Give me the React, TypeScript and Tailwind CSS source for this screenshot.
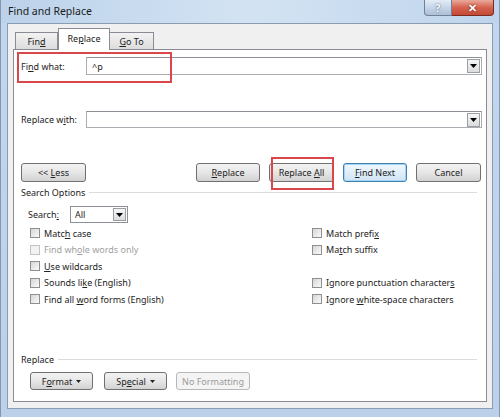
import React from 'react';
import clsx from 'clsx';

// Access key label: underlines the character at index `at`
const Acc: React.FC<{ text: string; at?: number }> = ({ text, at }) => {
  if (at === undefined || at < 0) return <>{text}</>;
  return (
    <>
      {text.slice(0, at)}
      <span className="underline underline-offset-[1px]">{text[at]}</span>
      {text.slice(at + 1)}
    </>
  );
};

const DropArrow: React.FC = () => (
  <svg width="7" height="4" viewBox="0 0 7 4">
    <path d="M0 0h7L3.5 4z" fill="#000" />
  </svg>
);

type BtnProps = {
  text: string;
  at?: number;
  className?: string;
  variant?: 'normal' | 'default' | 'disabled';
  menu?: boolean;
};

const Btn: React.FC<BtnProps> = ({ text, at, className, variant = 'normal', menu }) => (
  <div
    className={clsx(
      'flex items-center justify-center gap-[4px] rounded-[3px] border',
      variant === 'normal' &&
        'border-[#707070] bg-gradient-to-b from-[#f3f3f3] via-[#e6e6e6] to-[#d2d2d2] text-[#222]',
      variant === 'default' &&
        'border-[#3c7fb1] bg-gradient-to-b from-[#f1f8fd] via-[#e0eef9] to-[#cfe4f5] text-[#222] shadow-[inset_0_0_0_1px_#a7d4f3]',
      variant === 'disabled' && 'border-[#b5b9bd] bg-[#f4f4f4] text-[#9a9a9a]',
      className
    )}
  >
    <span>
      <Acc text={text} at={at} />
    </span>
    {menu && (
      <svg width="5" height="3" viewBox="0 0 5 3">
        <path d="M0 0h5L2.5 3z" fill="#222" />
      </svg>
    )}
  </div>
);

const Check: React.FC<{ text: string; at?: number; disabled?: boolean }> = ({ text, at, disabled }) => (
  <div className="flex h-[16.5px] items-center gap-[4px]">
    <div
      className={clsx(
        'h-[10px] w-[10px] border',
        disabled
          ? 'border-[#c4c4c4] bg-[#f2f2f2]'
          : 'border-[#8f8f8f] bg-gradient-to-br from-[#d6d6d6] to-[#fafafa]'
      )}
    />
    <span className={disabled ? 'text-[#a0a0a0]' : 'text-[#222]'}>
      <Acc text={text} at={at} />
    </span>
  </div>
);

const ComboInput: React.FC<{ value?: string; className?: string }> = ({ value, className }) => (
  <div
    className={clsx(
      'flex flex-1 items-center border border-[#abadb3] border-t-[#8d9097] bg-white pl-[5px] pr-[1px]',
      className
    )}
  >
    <span className="flex-1 text-[#222]">{value}</span>
    <div className="flex h-[14px] w-[13px] items-center justify-center border border-[#9a9ea5] bg-gradient-to-b from-[#f6f6f6] to-[#dcdcdc]">
      <DropArrow />
    </div>
  </div>
);

const Section: React.FC<{ title: string }> = ({ title }) => (
  <div className="flex h-[12px] items-center gap-[4px] pr-[5px]">
    <span className="text-[#222]">{title}</span>
    <div className="h-px flex-1 bg-[#dcdcdc]" />
  </div>
);

export default function App() {
  return (
    <div className="flex h-[417px] w-[500px] flex-col border-x border-[#8397ae] bg-gradient-to-b from-[#c2d6ed] to-[#bcd1e9] font-['Noto_Sans',sans-serif] text-[9px] leading-none">
      {/* Title bar */}
      <div className="flex h-[23px] items-start justify-between bg-gradient-to-r from-[#bcd2ea] via-[#d3e3f3] to-[#bfd4eb] pl-[7px] pr-[5px]">
        <span className="mt-[6px] text-[10.5px] text-[#1b1b1b]">Find and Replace</span>
        <div className="flex">
          <div className="flex h-[16px] w-[28px] items-center justify-center rounded-bl-[4px] border border-t-0 border-[#6f8199] bg-gradient-to-b from-[#e3ecf6] via-[#c6d6e8] to-[#aebfd6] text-[10px] font-bold text-[#f8fbff] [text-shadow:0_0_2px_#40506a]">
            ?
          </div>
          <div className="flex h-[16px] w-[42px] items-center justify-center rounded-br-[4px] border border-l-0 border-t-0 border-[#7b2a22] bg-gradient-to-b from-[#e9a99b] via-[#d5614f] to-[#c44a35] text-[11px] font-bold text-white [text-shadow:0_0_2px_#5a1208]">
            ✕
          </div>
        </div>
      </div>

      {/* Client area */}
      <div className="mx-[6px] mb-[8px] flex flex-1 flex-col border border-[#8a9cb1] bg-[#f0f0f0]">
        {/* Tabs */}
        <div className="relative z-10 -mb-px flex h-[26px] items-end pl-[7px]">
          <div className="flex h-[18px] w-[43px] items-center justify-center border border-[#898c95] bg-gradient-to-b from-[#f3f3f3] to-[#dcdcdc] text-[#222]">
            <Acc text="Find" at={3} />
          </div>
          <div className="flex h-[22px] w-[52px] items-center justify-center border border-b-0 border-[#898c95] bg-white pb-[2px] text-[#222]">
            <Acc text="Replace" at={2} />
          </div>
          <div className="flex h-[18px] w-[44px] items-center justify-center border border-l-0 border-[#898c95] bg-gradient-to-b from-[#f3f3f3] to-[#dcdcdc] text-[#222]">
            <Acc text="Go To" at={0} />
          </div>
        </div>

        {/* Tab panel */}
        <div className="relative mx-[5px] mb-[6px] flex flex-1 flex-col border border-[#898c95] bg-white pb-[11px] pl-[7px] pr-[4px]">
          <div className="mt-[7px] flex h-[18px] items-center">
            <span className="w-[65px] text-[#222]">
              <Acc text="Find what:" at={2} />
            </span>
            <ComboInput value="^p" className="h-[18px]" />
          </div>

          <div className="mt-[36px] flex h-[17px] items-center">
            <span className="w-[65px] text-[#222]">
              <Acc text="Replace with:" at={9} />
            </span>
            <ComboInput className="h-[17px]" />
          </div>

          <div className="mt-[35px] flex h-[19px] items-stretch pr-[1px]">
            <Btn text="<< Less" at={3} className="w-[65px]" />
            <div className="flex-1" />
            <div className="flex gap-[9px]">
              <Btn text="Replace" at={0} className="w-[64px]" />
              <Btn text="Replace All" at={8} className="w-[65px]" />
              <Btn text="Find Next" at={0} className="w-[64px]" variant="default" />
              <Btn text="Cancel" className="w-[65px]" />
            </div>
          </div>

          <div className="mt-[4px]">
            <Section title="Search Options" />
          </div>

          <div className="mt-[8px] flex h-[17px] items-center pl-[7px]">
            <span className="w-[42px] text-[#222]">
              <Acc text="Search:" at={6} />
            </span>
            <div className="flex h-[17px] w-[58px] items-center border border-[#8d9097] bg-white pl-[4px] pr-[1px]">
              <span className="flex-1 text-[#222]">All</span>
              <div className="flex h-[13px] w-[13px] items-center justify-center border border-[#9a9ea5] bg-gradient-to-b from-[#f6f6f6] to-[#dcdcdc]">
                <DropArrow />
              </div>
            </div>
          </div>

          <div className="mt-[2px] grid grid-cols-[282px_1fr] pl-[9px]">
            <div className="flex flex-col">
              <Check text="Match case" at={4} />
              <Check text="Find whole words only" at={7} disabled />
              <Check text="Use wildcards" at={0} />
              <Check text="Sounds like (English)" at={9} />
              <Check text="Find all word forms (English)" at={9} />
            </div>
            <div className="flex flex-col">
              <Check text="Match prefix" at={11} />
              <Check text="Match suffix" at={2} />
              <div className="h-[16.5px]" />
              <Check text="Ignore punctuation characters" at={28} />
              <Check text="Ignore white-space characters" at={7} />
            </div>
          </div>

          <div className="mt-auto">
            <Section title="Replace" />
            <div className="mt-[7px] flex h-[18px] pl-[9px]">
              <Btn text="Format" at={1} menu className="w-[63px]" />
              <Btn text="Special" at={2} menu className="ml-[11px] w-[63px]" />
              <Btn text="No Formatting" variant="disabled" className="ml-[9px] w-[74px]" />
            </div>
          </div>

          {/* Highlight boxes drawn over the dialog */}
          <div className="pointer-events-none absolute left-[3px] top-[2px] h-[31px] w-[155px] border-2 border-[#d9474a]" />
          <div className="pointer-events-none absolute left-[257px] top-[107px] h-[33px] w-[63px] border-2 border-[#d9474a]" />
        </div>
      </div>
    </div>
  );
}
